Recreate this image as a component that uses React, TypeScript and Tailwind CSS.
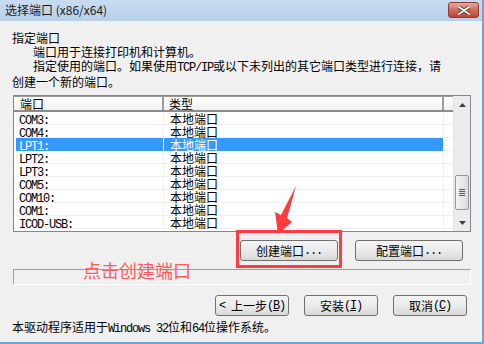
import React from "react";

const rows = ["COM3:", "COM4:", "LPT1:", "LPT2:", "LPT3:", "COM5:", "COM10:", "COM1:", "ICOD-USB:"];

const Btn = ({ children, className = "" }: { children: React.ReactNode; className?: string }) => (
  <button
    className={`h-[21px] rounded-[3px] border border-[#707070] bg-linear-to-b from-[#f4f4f4] via-[#ebebeb] to-[#d9d9d9] text-[12px] leading-none text-black flex items-center justify-center ${className}`}
  >
    {children}
  </button>
);

const Mono = ({ children }: { children: React.ReactNode }) => (
  <span className="font-['Liberation_Mono',monospace] text-[12px] tracking-[-1.2px]">{children}</span>
);

export default function App() {
  return (
    <div className="relative w-[484px] h-[344px] overflow-hidden bg-[#f0f0f0] border-r-2 border-b-2 border-[#6aa6da] font-['Noto_Sans_CJK_SC',sans-serif] text-black flex flex-col">
      {/* title bar */}
      <div className="h-[21px] shrink-0 bg-linear-to-b from-[#c8dcf1] to-[#b8d0ea] flex items-start justify-between pl-[5px] pr-[3px]">
        <div className="text-[12px] leading-[20px] text-[#1a1a1a]">选择端口 (x86/x64)</div>
        <div className="mt-[2px] w-[31px] h-[16px] rounded-[3px] border border-[#8b3b33] bg-linear-to-b from-[#e8a99f] via-[#d16a5c] to-[#c14434] flex items-center justify-center">
          <svg width="12" height="9" viewBox="0 0 12 9">
            <path d="M1 1 L11 8 M11 1 L1 8" stroke="#5a2520" strokeWidth="3.4" strokeLinecap="round" />
            <path d="M1 1 L11 8 M11 1 L1 8" stroke="#ffffff" strokeWidth="2" strokeLinecap="round" />
          </svg>
        </div>
      </div>

      {/* intro */}
      <div className="pt-[10px] text-[12px] leading-[14px]">
        <div className="pl-[12px]">指定端口</div>
        <div className="pl-[33px]">端口用于连接打印机和计算机。</div>
        <div className="pl-[33px] whitespace-nowrap">
          指定使用的端口。如果使用<Mono>TCP/IP</Mono>或以下未列出的其它端口类型进行连接，请
        </div>
        <div className="pl-[12px]">创建一个新的端口。</div>
      </div>

      {/* port list */}
      <div className="mt-[6px] ml-[13px] w-[458px] h-[137px] shrink-0 border border-[#828790] bg-white flex">
        <div className="w-[439px] flex flex-col">
          <div className="h-[16px] flex border-t border-[#9a9a9a] border-b-2 border-b-[#8c8c8c] bg-linear-to-b from-[#ffffff] to-[#f1f1f1] text-[12px] leading-[13px]">
            <div className="w-[150px] pl-[6px] border-r-2 border-[#9a9a9a]">端口</div>
            <div className="w-[280px] pl-[5px] border-r-2 border-[#9a9a9a]">类型</div>
            <div className="flex-1" />
          </div>
          {rows.map((r) => {
            const sel = r === "LPT1:";
            return (
              <div key={r} className="h-[13px] flex shadow-[inset_0_-1px_0_#f0f0f0] text-[12px] leading-[13px]">
                <div className={`ml-[2px] flex ${sel ? "bg-[#3399ff] text-white" : ""}`}>
                  <div className="w-[148px] pl-[3px] border-r border-[#f0f0f0]">
                    <Mono>{r}</Mono>
                  </div>
                  <div className="w-[280px] pl-[6px] border-r border-[#f0f0f0]">本地端口</div>
                </div>
              </div>
            );
          })}
        </div>
        {/* scrollbar */}
        <div className="w-[17px] bg-[#ececec] border-l border-[#e2e2e2] flex flex-col">
          <div className="h-[17px] flex items-center justify-center">
            <svg width="7" height="4" viewBox="0 0 7 4">
              <path d="M0 4 L3.5 0 L7 4 Z" fill="#404040" />
            </svg>
          </div>
          <div className="flex-1">
            <div className="mt-[62px] mx-auto w-[14px] h-[35px] rounded-[2px] border border-[#979797] bg-linear-to-r from-[#f3f3f3] to-[#dcdcdc] flex flex-col items-center justify-center gap-[1px]">
              <div className="w-[6px] h-[1px] bg-[#5a5a5a]" />
              <div className="w-[6px] h-[1px] bg-[#5a5a5a]" />
              <div className="w-[6px] h-[1px] bg-[#5a5a5a]" />
              <div className="w-[6px] h-[1px] bg-[#5a5a5a]" />
            </div>
          </div>
          <div className="h-[17px] flex items-center justify-center">
            <svg width="7" height="4" viewBox="0 0 7 4">
              <path d="M0 0 L7 0 L3.5 4 Z" fill="#404040" />
            </svg>
          </div>
        </div>
      </div>

      {/* port buttons */}
      <div className="mt-[8px] ml-[240px] flex gap-[17px] shrink-0">
        <Btn className="w-[98px]">
          创建端口<Mono>...</Mono>
        </Btn>
        <Btn className="w-[108px]">
          配置端口<Mono>...</Mono>
        </Btn>
      </div>

      {/* groove */}
      <div className="mt-[8px] ml-[13px] w-[458px] h-[16px] shrink-0 border border-t-[#a0a0a0] border-l-[#a0a0a0] border-r-white border-b-white" />

      {/* wizard buttons */}
      <div className="mt-[10px] ml-[215px] flex gap-[15px] shrink-0">
        <Btn className="w-[74px]">
          <Mono>&lt;&nbsp;</Mono>上一步<Mono>(<u>B</u>)</Mono>
        </Btn>
        <Btn className="w-[74px]">
          安装<Mono>(<u>I</u>)</Mono>
        </Btn>
        <Btn className="w-[74px]">
          取消<Mono>(<u>C</u>)</Mono>
        </Btn>
      </div>

      <div className="mt-[4px] pl-[12px] text-[12px] leading-[14px] whitespace-nowrap">
        本驱动程序适用于<Mono>Windows 32</Mono>位和<Mono>64</Mono>位操作系统。
      </div>

      {/* annotation overlay */}
      <div className="absolute left-[236px] top-[230px] w-[106px] h-[38px] border-[3px] border-[#ff3b3b]" />
      <div className="absolute left-[83px] top-[259px] text-[18px] leading-[22px] text-[#ff5a5a]">点击创建端口</div>
      <svg className="absolute left-0 top-0 pointer-events-none" width="484" height="344">
        <polygon points="296,186 287,218 292,222 278,234 275,212 281,215" fill="#ff3b3b" />
      </svg>
    </div>
  );
}
